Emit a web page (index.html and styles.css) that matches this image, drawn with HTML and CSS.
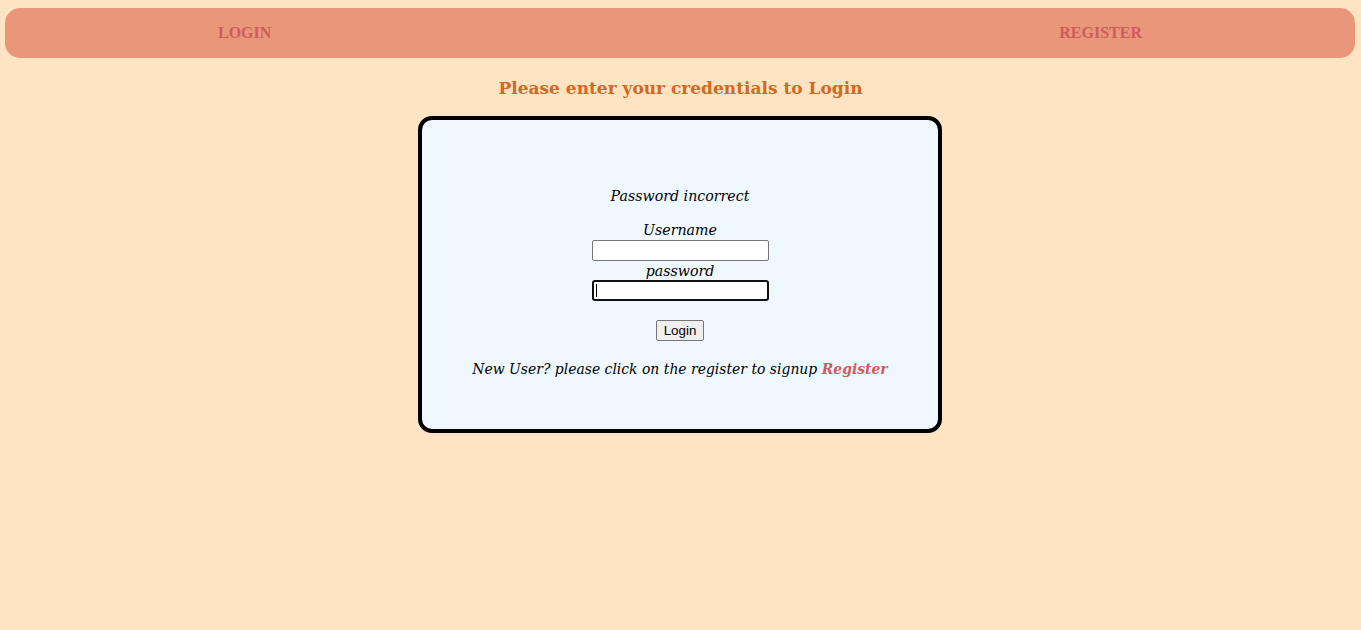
FILE: index.html
```html
<!DOCTYPE html>
<html lang="en">
<head>
<meta charset="utf-8">
<title>Login</title>
<link rel="stylesheet" href="styles.css">
</head>
<body>
<nav class="nav">
  <a class="nav-link" href="#">LOGIN</a>
  <a class="nav-link" href="#">REGISTER</a>
</nav>
<h3 class="title">Please enter your credentials to Login</h3>
<main class="card">
  <form class="form">
    <p class="error">Password incorrect</p>
    <label class="label label-user" for="username">Username</label>
    <input class="field" id="username" type="text">
    <label class="label label-pass" for="password">password</label>
    <span class="field-wrap"><input class="field field-focus" id="password" type="password"></span>
    <button class="btn" type="button">Login</button>
    <p class="signup">New User? please click on the register to signup <a class="signup-link" href="#">Register</a></p>
  </form>
</main>
</body>
</html>
```

FILE: styles.css
```css
html, body {
  margin: 0;
  padding: 0;
}
body {
  background: #ffe4c4;
  font-family: "Liberation Serif", serif;
  min-height: 630px;
}
.nav {
  margin: 8px 6px 0 5px;
  height: 50px;
  background: #e9967a;
  border-radius: 15px;
  display: flex;
  align-items: center;
  justify-content: space-between;
  padding: 0 213px;
  box-sizing: border-box;
}
.nav-link {
  font-family: "Liberation Serif", serif;
  font-weight: bold;
  font-size: 16px;
  color: #cd5c5c;
  text-decoration: none;
}
.title {
  margin: 17px 0 0;
  text-align: center;
  font-family: "DejaVu Serif", serif;
  font-weight: bold;
  font-size: 17px;
  line-height: 26px;
  color: #d2691e;
}
.card {
  width: 524px;
  height: 317px;
  box-sizing: border-box;
  margin: 15px auto 0 418px;
  background: #f0f8ff;
  border: 4px solid #000;
  border-radius: 14px;
  padding: 66px 0 0;
}
.form {
  display: flex;
  flex-direction: column;
  align-items: center;
  font-family: "DejaVu Serif", serif;
  font-style: italic;
  font-size: 14.2px;
  color: #000;
}
.error {
  margin: 0;
  line-height: 20px;
}
.label {
  line-height: 20px;
}
.label-user {
  margin-top: 14px;
  padding-top: 1px;
  line-height: 19px;
}
.label-pass {
  margin-top: 0;
  padding-top: 1px;
  line-height: 18px;
}
.field {
  width: 177px;
  height: 21px;
  box-sizing: border-box;
  border: 1px solid #767676;
  border-radius: 2px;
  background: #fff;
  padding: 1px 2px;
  margin: 0;
}
.field-wrap {
  position: relative;
  display: block;
  width: 177px;
  height: 21px;
}
.field-focus {
  outline: none;
  border: 2px solid #101010;
  border-radius: 3px;
}
.field-wrap::after {
  content: "";
  position: absolute;
  left: 4px;
  top: 4px;
  width: 1px;
  height: 13px;
  background: #000;
}
.btn {
  margin-top: 19px;
  width: 48px;
  height: 21px;
  box-sizing: border-box;
  padding: 0;
  font-family: Arial, "Liberation Sans", sans-serif;
  font-size: 13.33px;
  font-style: normal;
  color: #000;
  background: #efefef;
  border: 1px solid #767676;
  border-radius: 2px;
}
.signup {
  margin: 18px 0 0;
  line-height: 20px;
  font-size: 13.95px;
}
.signup-link {
  color: #cd5c5c;
  font-weight: bold;
  text-decoration: none;
}
```
